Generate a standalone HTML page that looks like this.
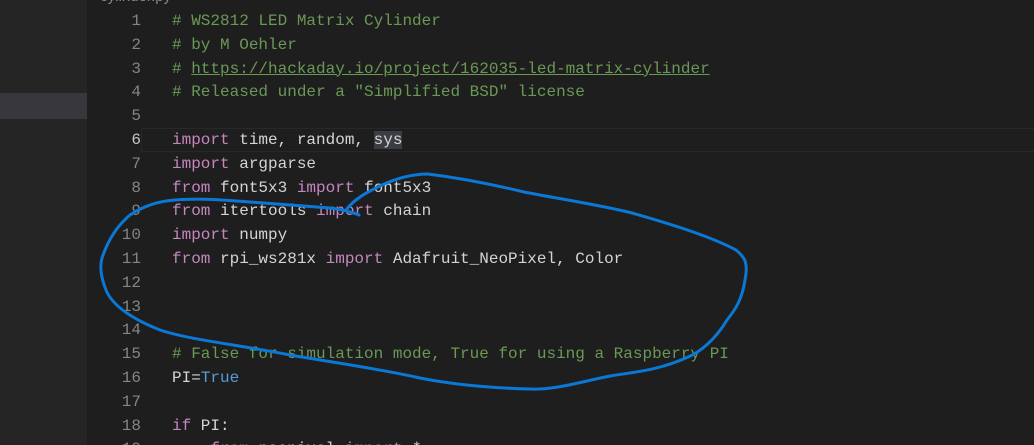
<!DOCTYPE html>
<html style="overflow:hidden;height:445px"><head><style>
body{margin:0;width:1034px;height:445px;overflow:hidden;background:#1e1e1e;position:relative;font-family:"Liberation Mono",monospace;}
.side{position:absolute;left:0;top:0;width:87px;height:445px;background:#252526;}
.sel{position:absolute;left:0;top:93px;width:87px;height:26px;background:#37373d;}
.ln{position:absolute;left:87px;width:54px;text-align:right;color:#858585;font-size:16px;line-height:23.8px;}
.code{position:absolute;left:172px;color:#d4d4d4;font-size:16px;line-height:23.8px;white-space:pre;}
.c{color:#6a9955}.k{color:#c586c0}.b{color:#569cd6}
.cur{position:absolute;left:141px;top:128px;width:893px;height:22px;border:1px solid #282828;}
</style></head><body>
<div class="side"></div><div class="sel"></div>
<div style="position:absolute;left:87px;top:-12px;color:#8a8a8a;font-family:'Liberation Sans',sans-serif;font-size:15px;"><span style="color:#519aba">●</span> cylinder.py</div>
<div class="cur"></div>
<div class="ln" style="top:10px">1<br>2<br>3<br>4<br>5<br><span style="color:#c6c6c6">6</span><br>7<br>8<br>9<br>10<br>11<br>12<br>13<br>14<br>15<br>16<br>17<br>18<br>19</div>
<div class="code" style="top:10px"><span class="c"># WS2812 LED Matrix Cylinder
# by M Oehler
# <u>https://hackaday.io/project/162035-led-matrix-cylinder</u>
# Released under a "Simplified BSD" license</span>

<span class="k">import</span> time, random, <span style="background:#3a3d41">sys</span>
<span class="k">import</span> argparse
<span class="k">from</span> font5x3 <span class="k">import</span> font5x3
<span class="k">from</span> itertools <span class="k">import</span> chain
<span class="k">import</span> numpy
<span class="k">from</span> rpi_ws281x <span class="k">import</span> Adafruit_NeoPixel, Color



<span class="c"># False for simulation mode, True for using a Raspberry PI</span>
PI=<span class="b">True</span>

<span class="k">if</span> PI:
    <span class="k">from</span> neopixel <span class="k">import</span> *</div>
<svg width="1034" height="445" style="position:absolute;left:0;top:0">
<path d="M359 215 C352 212 346 212 346 210 C352 202 362 195 370 191 C390 180 410 174 428 174 C460 178 495 185 524 192 C560 199 600 205 632 213 C670 224 710 236 736 250 C746 258 748 264 745 280 C742 300 735 310 727 320 C715 340 700 352 688 357 C660 370 635 372 610 376 C580 382 555 390 530 389 C490 388 455 385 420 378 C375 368 330 362 290 355 C240 345 190 340 160 330 C130 318 112 305 106 290 C100 275 100 265 102 258 C108 240 118 225 130 215 C145 205 160 201 175 200 C200 198 225 200 250 202 C280 204 305 206 330 208 C345 210 352 212 359 215" fill="none" stroke="#0a78d4" stroke-width="3" stroke-linecap="round"/>
</svg>
</body></html>
